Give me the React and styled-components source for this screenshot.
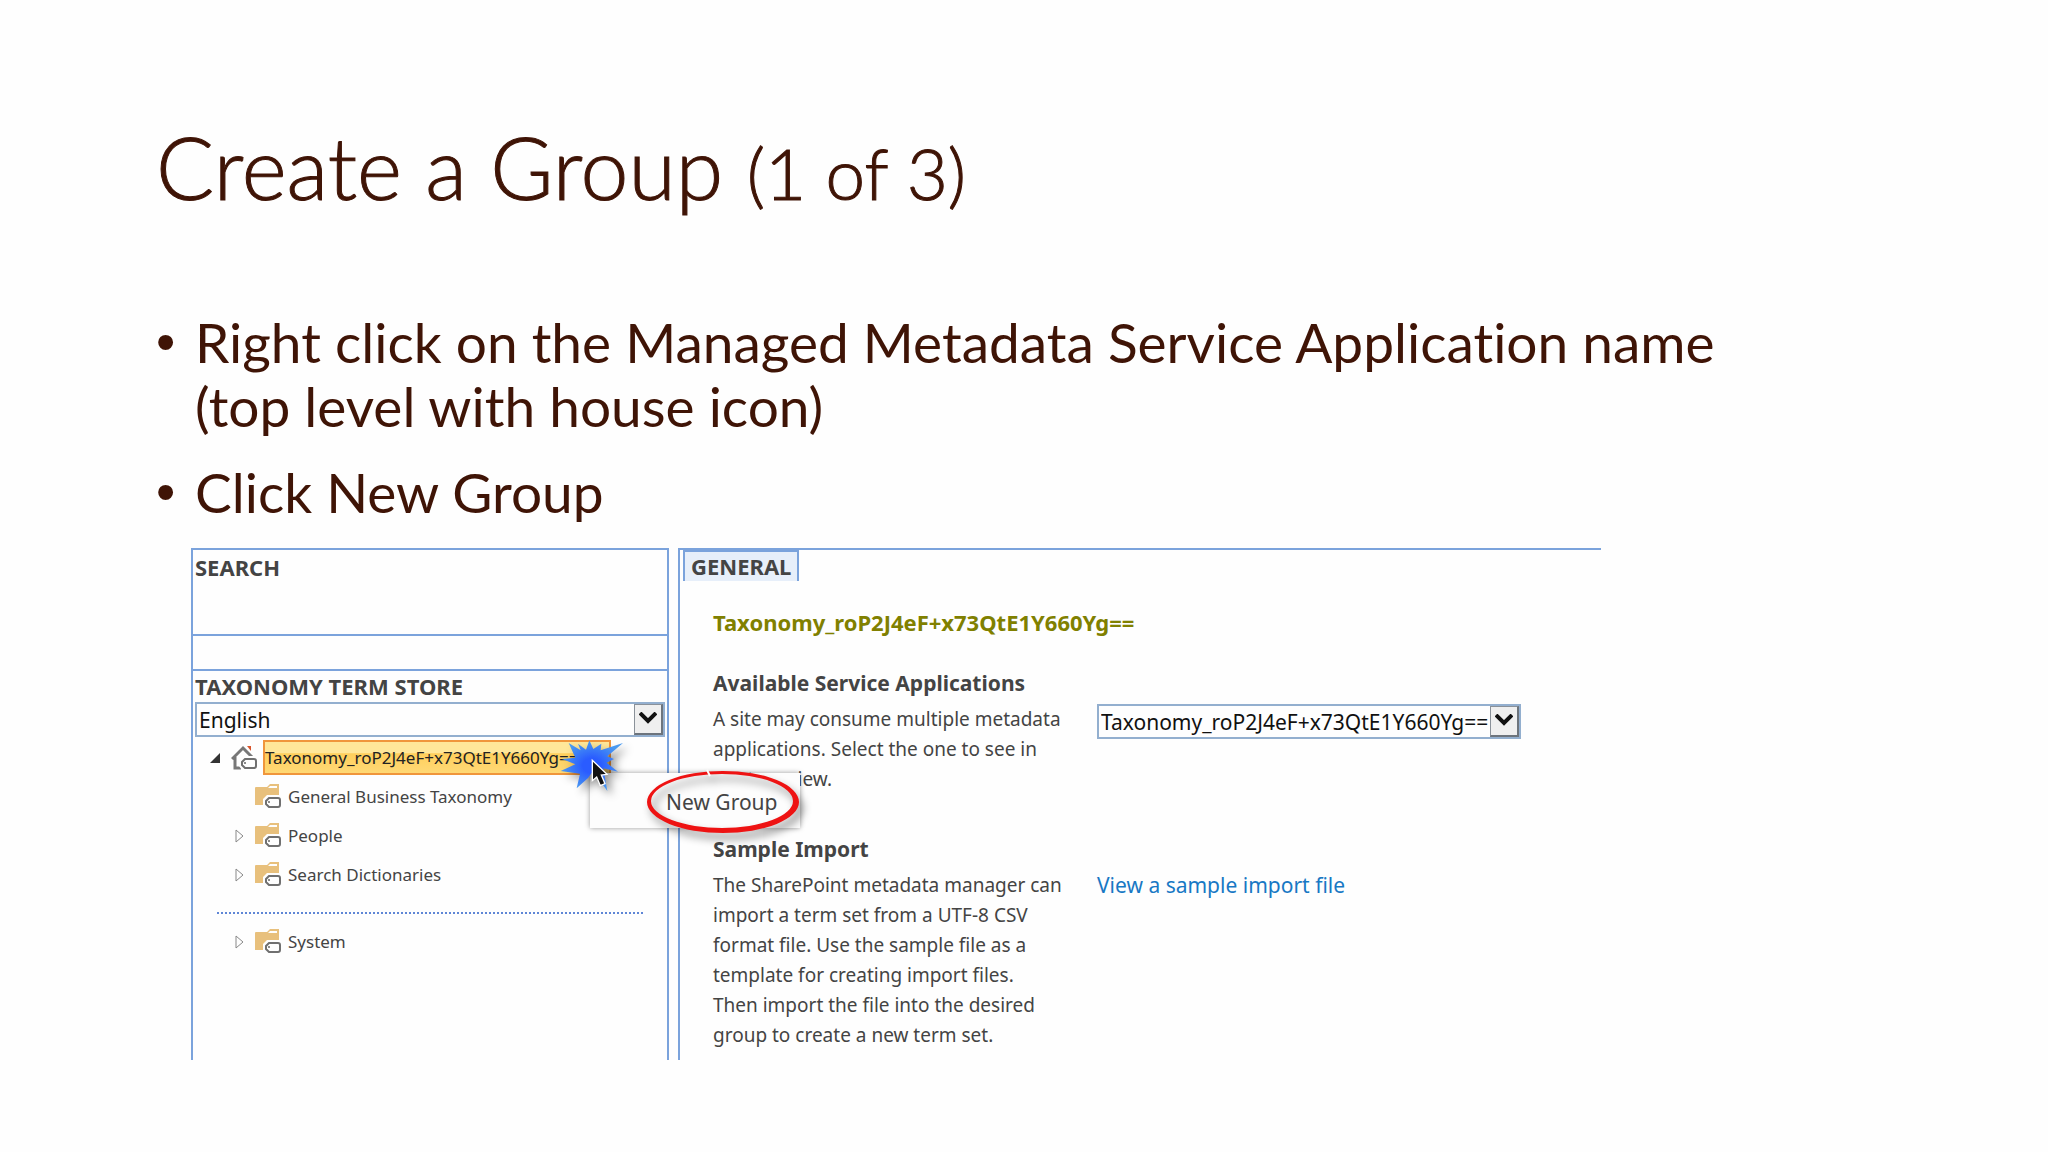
import styled, { createGlobalStyle } from 'styled-components';

const GlobalStyle = createGlobalStyle`
  * {
    box-sizing: border-box;
  }

  body {
    margin: 0;
    background: #fefefe;
    color: #444;
    font-family: 'Noto Sans', 'Open Sans', sans-serif;
    font-size: 19px;
  }
`;

const Slide = styled.main`
  min-height: 100vh;
  padding: 119px 156px 80px;
`;

const Title = styled.h1`
  margin: 0;
  color: #3f1406;
  font-family: Lato, sans-serif;
  font-size: 86px;
  font-weight: 300;
  line-height: 96px;
  -webkit-text-stroke: 1px #3f1406;
`;

const Count = styled.span`
  font-size: 71px;
`;

const Steps = styled.ul`
  margin: 89px 0 0;
  padding: 0;
  color: #3f1406;
  font-family: Lato, sans-serif;
  font-size: 55px;
  font-variant-ligatures: none;
  line-height: 64px;
  list-style: none;
`;

const Step = styled.li`
  display: grid;
  grid-template-columns: 39px 1fr;
  margin-bottom: 22px;

  &::before {
    content: '•';
    font-family: 'Liberation Sans', sans-serif;
  }
`;

const Screen = styled.section`
  display: grid;
  grid-template-columns: minmax(0, 478fr) minmax(0, 923fr);
  gap: 9px;
  max-width: 1410px;
  min-height: 512px;
  margin: 24px 0 0 35px;
`;

const Sidebar = styled.aside`
  border: 2px solid #7ba3dc;
  border-bottom: 0;
`;

const SearchBox = styled.div`
  height: 86px;
  padding: 2px;
  border-bottom: 2px solid #7ba3dc;
`;

const Spacer = styled.div`
  height: 35px;
  border-bottom: 2px solid #7ba3dc;
`;

const Caption = styled.h2`
  margin: 0;
  font-size: 22px;
  line-height: 31px;
`;

const SelectWrap = styled.div`
  position: relative;
`;

const Select = styled.select`
  width: 100%;
  height: 35px;
  padding: 0 30px 0 2px;
  appearance: none;
  border: 2px solid #93afcf;
  border-radius: 0;
  background: #fefefe;
  color: #111;
  font: inherit;
  font-size: 21px;
`;

const Arrow = styled.span`
  position: absolute;
  top: 2px;
  right: 2px;
  bottom: 2px;
  display: flex;
  width: 29px;
  align-items: center;
  justify-content: center;
  border: 1px solid #8a9199;
  border-right: 2px solid #6d747c;
  border-bottom: 2px solid #6d747c;
  background: #efefef;
  pointer-events: none;
`;

const StoreBox = styled.div`
  padding: 0 2px;
`;

const Tree = styled.ul`
  margin: 1px 0 0;
  padding: 0;
  list-style: none;
`;

const Node = styled.li`
  display: flex;
  height: 39px;
  align-items: center;
  padding-left: ${props => (props.$root ? '12px' : '36px')};
  font-size: 17px;
`;

const Toggle = styled.button`
  display: flex;
  width: 16px;
  height: 20px;
  align-items: center;
  justify-content: center;
  margin-right: 8px;
  padding: 0;
  border: 0;
  background: none;
  visibility: ${props => (props.$hidden ? 'hidden' : 'visible')};
`;

const NodeName = styled.span`
  margin-left: 7px;
`;

const Selected = styled.div`
  position: relative;
  width: 348px;
  height: 35px;
  margin-left: 5px;
  border: 2px solid #f0963c;
  background: linear-gradient(#ffe79a 0 34%, #ffcf5c 38%, #ffd976 100%);
  color: #222;
  line-height: 31px;
  white-space: nowrap;
`;

const Divider = styled.hr`
  height: 0;
  margin: 18px 22px 8px;
  border: 0;
  border-top: 2px dotted #5f86d6;
`;

const Menu = styled.div`
  position: absolute;
  z-index: 1;
  top: 31px;
  left: 325px;
  width: 210px;
  height: 55px;
  background: #fdfdfd;
  box-shadow: 0 0 5px rgba(0, 0, 0, 0.4);
`;

const MenuItem = styled.button`
  width: 100%;
  height: 100%;
  padding: 4px 0 0 76px;
  border: 0;
  background: none;
  color: #444;
  font: inherit;
  font-size: 21px;
  text-align: left;
`;

const Ring = styled.svg`
  position: absolute;
  top: -7px;
  left: 51px;
  overflow: visible;
  filter: drop-shadow(4px 6px 4px rgba(0, 0, 0, 0.45));
  pointer-events: none;
`;

const Burst = styled.svg`
  position: absolute;
  z-index: 2;
  top: -11px;
  left: 285px;
  filter: drop-shadow(5px 5px 4px rgba(0, 0, 0, 0.4));
  pointer-events: none;
`;

const Content = styled.section`
  border-top: 2px solid #7ba3dc;
  border-left: 2px solid #7ba3dc;
`;

const Tab = styled.button`
  display: block;
  height: 31px;
  margin-left: 3px;
  padding: 0 6px;
  border: 2px solid #7ba3dc;
  border-bottom: 0;
  background: #e7effa;
  color: #444;
  font: inherit;
  font-size: 22px;
  font-weight: 700;
  line-height: 29px;
`;

const Details = styled.div`
  padding: 26px 0 0 33px;
`;

const StoreName = styled.h2`
  margin: 0 0 31px;
  color: #808000;
  font-size: 22px;
  line-height: 30px;
`;

const Field = styled.div`
  display: grid;
  grid-template-columns: 356px 424px;
  column-gap: 28px;
  margin-bottom: 40px;

  &:last-child {
    margin-bottom: 0;
  }
`;

const FieldTitle = styled.h3`
  grid-column: 1 / -1;
  margin: 0;
  font-size: 21px;
  line-height: 30px;
`;

const Text = styled.p`
  margin: 6px 0 0;
  line-height: 30px;
`;

const Control = styled.div`
  margin-top: 6px;
  line-height: 30px;
`;

const Link = styled.a`
  color: #1878c4;
  font-size: 21px;
  text-decoration: none;
`;

const TagShape = () => (
  <g>
    <path d="M12 11h14v14H11l-3-4v-6z" fill="#fefefe" />
    <path d="M14 14h9q2 0 2 2v5q0 2-2 2h-9l-3-3v-3z" fill="#fefefe" stroke="#707070" strokeWidth="2" />
    <circle cx="14" cy="18" r="1" fill="#666" />
  </g>
);

const FolderIcon = () => (
  <svg width="26" height="26" viewBox="0 0 26 26" aria-hidden="true">
    <path d="M0 4q0-1 1-1h11l3-3h9v21H0z" fill="#e8c07c" />
    <path d="M15 2h7v2h-9z" fill="#fefefe" />
    <TagShape />
  </svg>
);

const HouseIcon = () => (
  <svg width="27" height="26" viewBox="0 0 27 26" aria-hidden="true">
    <path d="M1 14L12 3l11 11M4 12v11h6" fill="none" stroke="#777" strokeWidth="3" />
    <path d="M16 1h4v5z" fill="#d9542b" />
    <TagShape />
  </svg>
);

const Dropdown = ({ label, options }) => (
  <SelectWrap>
    <Select aria-label={label}>
      {options.map(option => (
        <option key={option}>{option}</option>
      ))}
    </Select>
    <Arrow>
      <svg width="18" height="14" viewBox="0 0 18 14" aria-hidden="true">
        <path d="M1 1l8 8 8-8" fill="none" stroke="#111" strokeWidth="4" />
      </svg>
    </Arrow>
  </SelectWrap>
);

const TreeNode = ({ name, leaf }) => (
  <Node>
    <Toggle $hidden={leaf} aria-label={`Expand ${name}`}>
      <svg width="9" height="14" viewBox="0 0 9 14" aria-hidden="true">
        <path d="M1 1v12l7-6z" fill="none" stroke="#888" />
      </svg>
    </Toggle>
    <FolderIcon />
    <NodeName>{name}</NodeName>
  </Node>
);

const ContextMenu = () => (
  <Menu role="menu">
    <MenuItem role="menuitem">New Group</MenuItem>
    <Ring width="160" height="68" viewBox="0 0 160 68" aria-hidden="true">
      <path
        d="M6 36a76 31 0 1 0 152 0a76 31 0 1 0-152 0zM10 35a71 27 0 1 1 142 0a71 27 0 1 1-142 0z"
        fill="#ee1313"
        fillRule="evenodd"
      />
      <path d="M66 4l3 6" stroke="#fefefe" strokeWidth="2" />
    </Ring>
  </Menu>
);

const ClickMark = () => (
  <Burst width="90" height="70" viewBox="0 0 270 210" aria-hidden="true">
    <defs>
      <radialGradient id="burst">
        <stop offset="0.3" stopColor="#2a5cff" />
        <stop offset="1" stopColor="#4a9af0" />
      </radialGradient>
    </defs>
    <path
      d="M56 36L92 58L84 38L108 56L118 28L130 54L154 38L152 58L219 36L172 76L192 84L170 95L204 122L160 112L172 180L140 135L125 125L115 140L80 172L90 128L32 120L76 100L36 84L76 80Z"
      fill="url(#burst)"
    />
    <path
      d="M127 88V149L140 138L151 164L165 158L154 132L171 130Z"
      fill="#111"
      stroke="#fff"
      strokeWidth="4"
    />
  </Burst>
);

const storeName = 'Taxonomy_roP2J4eF+x73QtE1Y660Yg==';

const App = () => (
  <>
    <GlobalStyle />
    <Slide>
      <Title>
        Create a Group <Count>(1 of 3)</Count>
      </Title>
      <Steps>
        <Step>
          <span>
            Right click on the Managed Metadata Service Application name
            <br />
            (top level with house icon)
          </span>
        </Step>
        <Step>
          <span>Click New Group</span>
        </Step>
      </Steps>
      <Screen>
        <Sidebar>
          <SearchBox>
            <Caption>SEARCH</Caption>
          </SearchBox>
          <Spacer />
          <StoreBox>
            <Caption>TAXONOMY TERM STORE</Caption>
            <Dropdown label="Language" options={['English']} />
            <Tree>
              <Node $root>
                <Toggle aria-label="Collapse term store">
                  <svg width="10" height="10" viewBox="0 0 10 10" aria-hidden="true">
                    <path d="M10 0v10H0z" fill="#333" />
                  </svg>
                </Toggle>
                <HouseIcon />
                <Selected>
                  {storeName}
                  <ContextMenu />
                  <ClickMark />
                </Selected>
              </Node>
              <TreeNode name="General Business Taxonomy" leaf />
              <TreeNode name="People" />
              <TreeNode name="Search Dictionaries" />
            </Tree>
            <Divider />
            <Tree>
              <TreeNode name="System" />
            </Tree>
          </StoreBox>
        </Sidebar>
        <Content>
          <Tab>GENERAL</Tab>
          <Details>
            <StoreName>{storeName}</StoreName>
            <Field>
              <FieldTitle>Available Service Applications</FieldTitle>
              <Text>
                A site may consume multiple metadata applications. Select the one to see in the tree view.
              </Text>
              <Control>
                <Dropdown label="Available Service Applications" options={[storeName]} />
              </Control>
            </Field>
            <Field>
              <FieldTitle>Sample Import</FieldTitle>
              <Text>
                The SharePoint metadata manager can import a term set from a UTF-8 CSV format file. Use
                the sample file as a template for creating import files.
                <br />
                Then import the file into the desired group to create a new term set.
              </Text>
              <Control>
                <Link href="#sample">View a sample import file</Link>
              </Control>
            </Field>
          </Details>
        </Content>
      </Screen>
    </Slide>
  </>
);

export default App;
